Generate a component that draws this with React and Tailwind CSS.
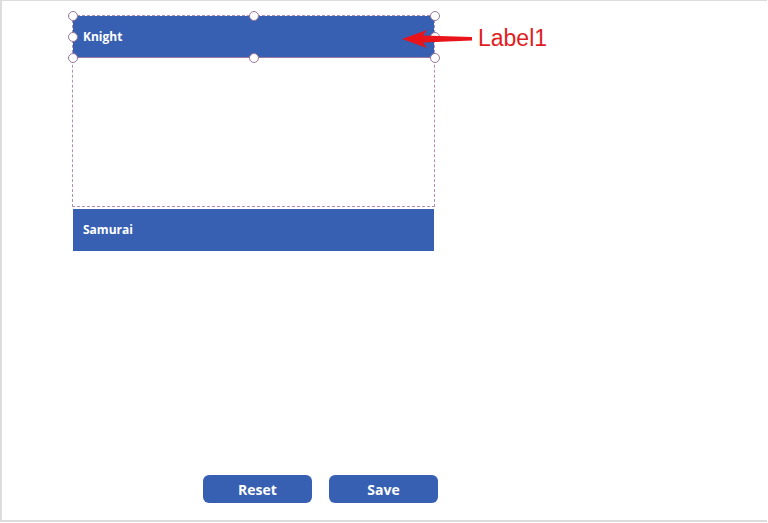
import React from 'react';

const handles = [
  'left-[-5px] top-[-5px]',
  'left-[176px] top-[-5px]',
  'left-[357px] top-[-5px]',
  'left-[-5px] top-[16px]',
  'left-[357px] top-[16px]',
  'left-[-5px] top-[37px]',
  'left-[176px] top-[37px]',
  'left-[357px] top-[37px]',
];

function Handle({ pos }) {
  return <span className={`absolute ${pos} w-[10px] h-[10px] rounded-full bg-white border-[1.5px] border-[#957799]`} />;
}

export default function App() {
  return (
    <div className="w-[768px] h-[523px] bg-white font-['Open_Sans',sans-serif]">
      <div className="w-[767px] h-[522px] border-t border-l-2 border-b-2 border-[#dcdcdc] flex flex-col relative">
        {/* gallery */}
        <div className="ml-[70px] mt-[14px] w-[363px] h-[192px] border border-dashed border-[#b58bb8] relative">
          <div className="h-[42px] bg-[#3860b2] flex items-center pl-[10px] border-b border-[#9a7a9e]">
            <span className="text-white text-[12px] font-bold">Knight</span>
          </div>
          {handles.map((h) => <Handle key={h} pos={h} />)}
        </div>

        {/* annotation */}
        <div className="absolute left-[400px] top-[26px] flex items-center">
          <svg width="72" height="20" viewBox="0 0 72 20">
            <path d="M0 10 L25 1 L21 6.5 L70 8 L70 11.5 L21 13.5 L25 19 Z" fill="#e8141a" />
          </svg>
          <span className="ml-[4px] text-[#e01d22] text-[23px] font-['Liberation_Sans',sans-serif] leading-none">Label1</span>
        </div>

        <div className="ml-[71px] mt-[2px] w-[361px] h-[42px] bg-[#3860b2] flex items-center pl-[10px]">
          <span className="text-white text-[12px] font-bold">Samurai</span>
        </div>

        <div className="mt-auto mb-[17px] ml-[201px] flex gap-[17px]">
          <button className="w-[109px] h-[28px] rounded-[6px] bg-[#3860b2] text-white text-[14px] font-bold">Reset</button>
          <button className="w-[109px] h-[28px] rounded-[6px] bg-[#3860b2] text-white text-[14px] font-bold">Save</button>
        </div>
      </div>
    </div>
  );
}
